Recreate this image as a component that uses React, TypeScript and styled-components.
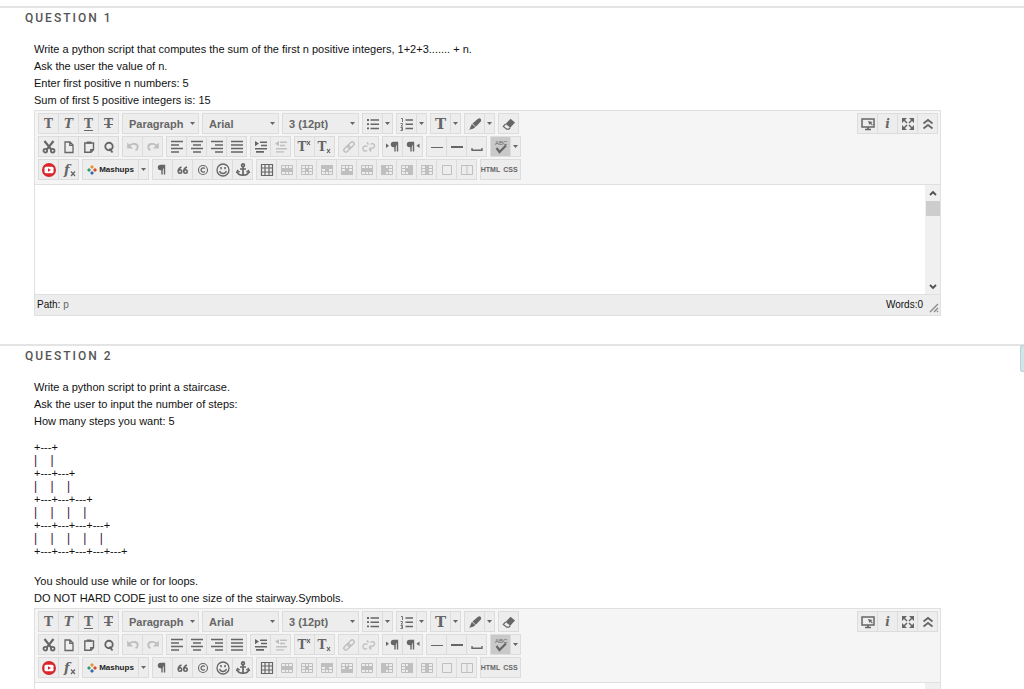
import React, { ReactNode } from "react";
import styled, { createGlobalStyle } from "styled-components";

const GlobalStyle = createGlobalStyle`
  body {
    margin: 0;
    background: #fff;
    color: #111;
    font-family: "Liberation Sans", Arial, sans-serif;
    font-size: 11px;
    line-height: 17px;
  }
  * { box-sizing: border-box; }
`;

const Page = styled.main`
  position: relative;
  height: 100vh;
  overflow-y: auto;
  scrollbar-width: none;
  padding-top: 6px;
`;

const SideTab = styled.div`
  position: absolute;
  top: 345px;
  right: 0;
  width: 4px;
  height: 27px;
  background: #cfe6ea;
  border: 1px solid #bccfd3;
  border-right: 0;
  border-radius: 3px 0 0 3px;
`;

const Question = styled.section`
  border-top: 2px solid #e4e4e4;
  padding: 0 83px 28px 34px;
`;

const Heading = styled.h2`
  margin: 0 0 13px -9px;
  font-family: Roboto, "Liberation Sans", sans-serif;
  font-size: 12px;
  font-weight: 500;
  line-height: 20px;
  letter-spacing: 2px;
  color: #555;
`;

const Line = styled.p`
  margin: 0;
`;

const Stairs = styled.div`
  margin: 11px 0 15px;
  white-space: pre;
`;

const Tread = styled.div`
  font-size: 11px;
  line-height: 13px;
`;

const Riser = styled.div`
  font-size: 12px;
  line-height: 13px;
  color: #3b1040;
`;

const EditorBox = styled.div`
  margin-top: 1px;
  border: 1px solid #e0e0e0;
`;

const Toolbar = styled.div`
  display: flex;
  justify-content: space-between;
  align-items: flex-start;
  padding: 2px 2px 4px 3px;
  background: #f5f5f5;
  border-bottom: 1px solid #e0e0e0;
`;

const Rows = styled.div`
  display: flex;
  flex-direction: column;
  gap: 2px;
`;

const Row = styled.div`
  display: flex;
  gap: 3px;
`;

const Group = styled.div`
  display: flex;
  height: 21px;
  background: #ededed;
  border: 1px solid #dcdcdc;
  border-left: 0;
`;

const Tool = styled.button<{ $w?: number; $off?: boolean; $on?: boolean; $bare?: boolean }>`
  display: flex;
  align-items: center;
  justify-content: center;
  width: ${(p) => p.$w ?? 20}px;
  height: 19px;
  padding: 0;
  border: 0;
  border-left: 1px solid ${(p) => (p.$bare ? "transparent" : "#dcdcdc")};
  background: ${(p) => (p.$on ? "#c9c9c9" : "transparent")};
  color: ${(p) => (p.$off ? "#bfbfbf" : "#666")};
  font-family: inherit;
  svg { display: block; flex: none; }
`;

const Letter = styled.span<{ $kind?: "i" | "u" | "s"; $large?: boolean }>`
  font-family: "DejaVu Serif", serif;
  font-size: ${(p) => (p.$large ? 15 : 12)}px;
  font-weight: 700;
  line-height: 14px;
  font-style: ${(p) => (p.$kind === "i" ? "italic" : "normal")};
  text-decoration: ${(p) => (p.$kind === "u" ? "underline" : p.$kind === "s" ? "line-through" : "none")};
  text-underline-offset: 2px;
  text-decoration-thickness: 1px;
`;

const Small = styled.span`
  font-size: 7px;
  line-height: 10px;
  font-weight: 700;
`;

const MashLabel = styled.span`
  margin-left: 2px;
  font-size: 8px;
  line-height: 12px;
  font-weight: 700;
  color: #222;
`;

const Picker = styled.label`
  display: flex;
  align-items: center;
  width: 76px;
  padding-right: 3px;
  border-left: 1px solid #dcdcdc;
  color: #666;
`;

const Select = styled.select`
  flex: 1;
  min-width: 0;
  height: 19px;
  padding: 0 0 0 6px;
  border: 0;
  appearance: none;
  background: transparent;
  color: #666;
  font-family: "Liberation Sans", Arial, sans-serif;
  font-size: 11px;
  font-weight: 700;
`;

const Body = styled.div`
  display: flex;
  height: 109px;
`;

const Area = styled.textarea`
  flex: 1;
  min-width: 0;
  border: 0;
  padding: 8px;
  resize: none;
  outline: none;
  background: #fff;
  font: inherit;
`;

const Scroll = styled.div`
  display: flex;
  flex-direction: column;
  align-items: center;
  width: 15px;
  background: #f0f0f0;
  color: #505050;
`;

const Thumb = styled.div`
  width: 14px;
  height: 15px;
  margin-bottom: auto;
  background: #cdcdcd;
`;

const Status = styled.div`
  display: flex;
  align-items: center;
  height: 21px;
  padding: 0 0 2px 2px;
  background: #ededed;
  border-top: 1px solid #e0e0e0;
  font-size: 10px;
`;

const PathName = styled.span`
  margin-left: 3px;
  color: #666;
`;

const Words = styled.span`
  margin-left: auto;
  margin-right: 6px;
`;

const Svg = ({ children, w = 16, h = 16 }: { children: ReactNode; w?: number; h?: number }) => (
  <svg width={w} height={h} viewBox={`0 0 ${w} ${h}`} fill="none" stroke="currentColor" aria-hidden="true">
    {children}
  </svg>
);

const Caret = () => (
  <Svg w={5} h={3}>
    <path d="M0 0h5L2.5 3z" fill="currentColor" stroke="none" />
  </Svg>
);

const Chevron = ({ down }: { down?: boolean }) => (
  <Svg w={14} h={16}>
    <path d={down ? "M4 7l3 3 3-3" : "M4 10l3-3 3 3"} strokeWidth="1.8" />
  </Svg>
);

const lines = (rows: number[][]) => (
  <path strokeWidth="1.6" d={rows.map(([x, w], i) => `M${x} ${2.5 + i * 3.5}h${w}`).join("")} />
);

const grid = (fill: string) => (
  <g strokeWidth="1">
    <path d="M2.5 3.5h11v9h-11zM2.5 6.5h11M2.5 9.5h11M6.5 3.5v9M9.5 3.5v9" />
    <path d={fill} fill="currentColor" stroke="none" />
  </g>
);

const pilcrow = (x: number) => (
  <g transform={`translate(${x} 0)`}>
    <path d="M8.5 3.5v9M6 3.5v9" strokeWidth="1.4" />
    <path d="M9.4 2.8H4.5a2.6 2.6 0 0 0 0 5.4h2z" fill="currentColor" stroke="none" />
  </g>
);

const icons: Record<string, ReactNode> = {
  cut: (
    <g strokeWidth="1.8">
      <path d="M3.5 2l6.8 8.6M12.5 2L5.7 10.6" strokeWidth="2.2" />
      <circle cx="4.3" cy="11.7" r="1.8" />
      <circle cx="11.7" cy="11.7" r="1.8" />
    </g>
  ),
  copy: <path d="M4 3h5l3 3v7.5H4zM8.8 3v3.4H12" strokeWidth="1.3" />,
  paste: (
    <g strokeWidth="1.4">
      <path d="M6 4H3.8v9.3h6.2l2.5-2.5V4H10M12.4 10.6H9.8v2.6" />
      <path d="M5.8 2.5h4.6v2.4H5.8z" fill="currentColor" stroke="none" />
    </g>
  ),
  find: (
    <g strokeWidth="1.9">
      <circle cx="8" cy="7.5" r="3.7" />
      <path d="M8.5 9.5l3 4" />
    </g>
  ),
  undo: (
    <g>
      <path d="M4.5 6.5C8 3.5 13 5 12.7 8.3c-.1 1.4-1 2.3-2.2 2.7" strokeWidth="1.9" />
      <path d="M2.2 3.5v6h6z" fill="currentColor" stroke="none" />
    </g>
  ),
  redo: (
    <g>
      <path d="M11.5 6.5C8 3.5 3 5 3.3 8.3c.1 1.4 1 2.3 2.2 2.7" strokeWidth="1.9" />
      <path d="M13.8 3.5v6h-6z" fill="currentColor" stroke="none" />
    </g>
  ),
  left: lines([[2, 12], [2, 8], [2, 12], [2, 8]]),
  center: lines([[2, 12], [4, 8], [2, 12], [4, 8]]),
  right: lines([[2, 12], [6, 8], [2, 12], [6, 8]]),
  full: lines([[2, 12], [2, 12], [2, 12], [2, 12]]),
  indent: (
    <g>
      <path d="M7 3.3h7M8 6.5h6M2 9.7h12M3 12.9h8" strokeWidth="1.6" />
      <path d="M2 2l4 2.6-4 2.6z" fill="currentColor" stroke="none" />
    </g>
  ),
  outdent: (
    <g>
      <path d="M7 3.3h7M7 6.5h5M3 9.7h11M3 12.9h8" strokeWidth="1.4" />
      <path d="M6 2L2 4.6l4 2.6z" fill="currentColor" stroke="none" />
    </g>
  ),
  link: (
    <g transform="rotate(-45 8 8)" strokeWidth="1.4">
      <rect x="1.5" y="6" width="7.5" height="4" rx="2" />
      <rect x="7" y="6" width="7.5" height="4" rx="2" />
    </g>
  ),
  unlink: (
    <g strokeWidth="1.4">
      <path d="M6.5 7.5c-2-1.5-4.5 0-4.5 2.3s2.5 3 4 1.5M9.5 8.5c2 1.5 4.5 0 4-2s-2.5-2.5-4-1" />
      <path d="M6 3.5l1.5 2M10 12.5L8.500 10.500M8 9.500l2.500 1" />
    </g>
  ),
  ltr: (
    <g>
      {pilcrow(4)}
      <path d="M1 4.5l3 2.3-3 2.3z" fill="currentColor" stroke="none" />
    </g>
  ),
  rtl: (
    <g>
      {pilcrow(0)}
      <path d="M14.5 4.5l-3 2.3 3 2.3z" fill="currentColor" stroke="none" />
    </g>
  ),
  rule: <path d="M2 8.5h12" strokeWidth="1" />,
  thick: <path d="M2 8h12" strokeWidth="2" />,
  nbsp: <path d="M3 9v2.3h10V9" strokeWidth="1.4" />,
  spell: (
    <g>
      <text x="2" y="6" fontSize="6" fill="currentColor" stroke="none">ABC</text>
      <path d="M3.5 9l3 4L13 6.5" strokeWidth="2.2" />
    </g>
  ),
  ul: (
    <g>
      <path d="M5.5 4h8.5M5.5 8.2h8.5M5.5 12.4h8.5" strokeWidth="1.5" />
      <path d="M2 4h2M2 8.2h2M2 12.4h2" strokeWidth="1.8" />
    </g>
  ),
  ol: (
    <g>
      <path d="M6.5 4h7.5M6.5 8.2h7.5M6.5 12.4h7.5" strokeWidth="1.5" />
      <path d="M2 2.5h1.5V6M1.5 7.5h2v1l-1.5 1.5h2M1.5 11.5h2v3h-2M2 13h1.5" strokeWidth=".9" />
    </g>
  ),
  pen: (
    <g fill="currentColor" stroke="none">
      <path d="M5.5 7.5L11 2.8q1.700-1 2.800.2 1 1.300-.2 2.800L8.800 10.800z" />
      <path d="M4.900 8.100l3.400 3q-1.500 2.300-6.300 2.600 1.400-1.200 1.300-2.500z" />
    </g>
  ),
  eraser: (
    <g>
      <path d="M9.5 2.8L14 6.5l-4.8 5.2-4.6-3.800z" fill="currentColor" stroke="none" />
      <path d="M4.600 8L2.300 10.400l3.400 2.800h2.200l1.400-1.600" strokeWidth="1.2" />
    </g>
  ),
  youtube: (
    <g stroke="none">
      <circle cx="8" cy="8" r="7" fill="#d8262c" />
      <rect x="3.5" y="4.8" width="9" height="6.4" rx="1.5" fill="#fff" />
      <path d="M7 6.300L10 8 7 9.700z" fill="#d8262c" />
    </g>
  ),
  para: pilcrow(1),
  quote: (
    <g strokeWidth="1.6">
      <circle cx="5" cy="9.5" r="1.7" />
      <circle cx="10.5" cy="9.5" r="1.7" />
      <path d="M3.3 9q.2-3 3.200-4M8.800 9q.2-3 3.200-4" />
    </g>
  ),
  copyright: (
    <g>
      <circle cx="8" cy="8" r="4.5" strokeWidth="1.1" />
      <path d="M9.800 6.700a2.100 2.100 0 1 0 0 2.600" strokeWidth="1.3" />
    </g>
  ),
  smile: (
    <g>
      <circle cx="8" cy="8" r="6" strokeWidth="1.3" />
      <path d="M4.600 9c1 3.300 5.800 3.300 6.800 0" strokeWidth="1.3" />
      <path d="M6 5v2.200M10 5v2.200" strokeWidth="1.5" />
    </g>
  ),
  anchor: (
    <g strokeWidth="1.7">
      <circle cx="8" cy="3.3" r="1.4" />
      <path d="M8 4.700v8.500M5 7h6M2.500 9.500c.3 5 10.700 5 11 0" />
      <path d="M1.300 11l1.200-2.500L4.700 10M14.700 11l-1.200-2.500L11.300 10" strokeWidth="1.2" />
    </g>
  ),
  table: <path d="M2.5 2.5h11v11h-11zM2.5 6h11M2.5 10h11M6 2.500v11M10 2.500v11" strokeWidth="1.2" />,
  t1: grid("M2 6h12v4H2z"),
  t2: grid("M6 6h4v4H6z"),
  t3: grid("M2 3h12v3H2zM6 6h4v3H6z"),
  t4: grid("M2 10h12v3H2zM6 7h4v3H6z"),
  t5: grid("M3 6h3v4H3zM10 6h3v4h-3zM6 7h4v2H6z"),
  t6: grid("M2 3h4v10H2zM6 6h3v4H6z"),
  t7: grid("M10 3h4v10h-4zM7 6h3v4H7z"),
  t8: grid("M6 3h4v10H6z"),
  t9: <path d="M3.5 3.5h9v9h-9z" />,
  t10: <path d="M2.5 3.5h11v9h-11zM8 3.500v9" />,
  screen: (
    <g>
      <path d="M2 3h12v8H2z" strokeWidth="1.5" />
      <path d="M8 11v2.500M5 13.500h6" strokeWidth="1.7" />
      <path d="M8 5l1.500 4 .9-1.200L12 9.500l.8-.8-1.600-1.600L12.500 6z" fill="currentColor" stroke="none" />
    </g>
  ),
  expand: (
    <g>
      <path d="M3 3l4 4M13 3L9 7M3 13l4-4M13 13L9 9" strokeWidth="1.5" />
      <path d="M2 2h5L2 7zM14 2H9l5 5zM2 14h5L2 9zM14 14H9l5-5z" fill="currentColor" stroke="none" />
    </g>
  ),
  collapse: <path d="M3.5 7.500L8 4l4.500 3.500M3.500 12.500L8 9l4.500 3.500" strokeWidth="1.8" />,
};

const Btn = ({ icon, label, off, on }: { icon: string; label: string; off?: boolean; on?: boolean }) => (
  <Tool type="button" aria-label={label} $off={off} $on={on}>
    <Svg>{icons[icon]}</Svg>
  </Tool>
);

const Drop = ({ label }: { label: string }) => (
  <Tool type="button" aria-label={label} $w={10}>
    <Caret />
  </Tool>
);

const ToolSet = ({ items, off }: { items: [string, string][]; off?: boolean }) => (
  <Group>
    {items.map(([icon, label]) => (
      <Btn key={icon} icon={icon} label={label} off={off} />
    ))}
  </Group>
);

const Choice = ({ label, value }: { label: string; value: string }) => (
  <Group>
    <Picker>
      <Select aria-label={label} defaultValue={value}>
        <option>{value}</option>
      </Select>
      <Caret />
    </Picker>
  </Group>
);

const Editor = ({ name }: { name: string }) => (
  <EditorBox>
    <Toolbar>
      <Rows>
        <Row>
          <Group>
            <Tool type="button" aria-label="Bold"><Letter>T</Letter></Tool>
            <Tool type="button" aria-label="Italic"><Letter $kind="i">T</Letter></Tool>
            <Tool type="button" aria-label="Underline"><Letter $kind="u">T</Letter></Tool>
            <Tool type="button" aria-label="Strikethrough"><Letter $kind="s">T</Letter></Tool>
          </Group>
          <Choice label="Format" value="Paragraph" />
          <Choice label="Font" value="Arial" />
          <Choice label="Font size" value="3 (12pt)" />
          <Group><Btn icon="ul" label="Bullet list" /><Drop label="Bullet styles" /></Group>
          <Group><Btn icon="ol" label="Numbered list" /><Drop label="Number styles" /></Group>
          <Group>
            <Tool type="button" aria-label="Text color"><Letter $large>T</Letter></Tool>
            <Drop label="Text colors" />
          </Group>
          <Group><Btn icon="pen" label="Highlight" /><Drop label="Highlight colors" /></Group>
          <Group><Btn icon="eraser" label="Remove formatting" /></Group>
        </Row>
        <Row>
          <ToolSet items={[["cut", "Cut"], ["copy", "Copy"], ["paste", "Paste"], ["find", "Find"]]} />
          <ToolSet off items={[["undo", "Undo"], ["redo", "Redo"]]} />
          <ToolSet items={[["left", "Align left"], ["center", "Align center"], ["right", "Align right"], ["full", "Justify"]]} />
          <Group><Btn icon="indent" label="Indent" /><Btn icon="outdent" label="Outdent" off /></Group>
          <Group>
            <Tool type="button" aria-label="Superscript">
              <Letter>T</Letter>
              <Svg w={5} h={14}><path d="M1 1l3 4M4 1L1 5" strokeWidth="1.2" /></Svg>
            </Tool>
            <Tool type="button" aria-label="Subscript">
              <Letter>T</Letter>
              <Svg w={5} h={14}><path d="M1 9l3 4M4 9l-3 4" strokeWidth="1.2" /></Svg>
            </Tool>
          </Group>
          <ToolSet off items={[["link", "Insert link"], ["unlink", "Remove link"]]} />
          <ToolSet items={[["ltr", "Left to right"], ["rtl", "Right to left"]]} />
          <ToolSet items={[["rule", "Line"], ["thick", "Horizontal rule"], ["nbsp", "Nonbreaking space"]]} />
          <Group><Btn icon="spell" label="Spell check" on /><Drop label="Spelling languages" /></Group>
        </Row>
        <Row>
          <Group>
            <Btn icon="youtube" label="Video" />
            <Tool type="button" aria-label="Formula">
              <Svg>
                <text x="3" y="12" fontFamily="DejaVu Serif" fontStyle="italic" fontWeight="700" fontSize="13" fill="currentColor" stroke="none">f</text>
                <path d="M10 9.500l4 4.500M14 9.500L10 14" strokeWidth="1.2" />
              </Svg>
            </Tool>
          </Group>
          <Group>
            <Tool type="button" $w={56}>
              <Svg w={10} h={10}>
                <g stroke="none">
                  <path d="M5 0l2 2-2 2-2-2z" fill="#e8912d" />
                  <path d="M8 3l2 2-2 2-2-2z" fill="#d9482b" />
                  <path d="M5 6l2 2-2 2-2-2z" fill="#2b6cb0" />
                  <path d="M2 3l2 2-2 2-2-2z" fill="#2a9d6a" />
                </g>
              </Svg>
              <MashLabel>Mashups</MashLabel>
            </Tool>
            <Drop label="Mashup types" />
          </Group>
          <ToolSet items={[["para", "Show characters"], ["quote", "Block quote"], ["copyright", "Symbol"], ["smile", "Emoticon"], ["anchor", "Anchor"]]} />
          <Group>
            <Btn icon="table" label="Insert table" />
            <Btn icon="t1" label="Row properties" off />
            <Btn icon="t2" label="Cell properties" off />
            <Btn icon="t3" label="Insert row above" off />
            <Btn icon="t4" label="Insert row below" off />
            <Btn icon="t5" label="Delete row" off />
            <Btn icon="t6" label="Insert column left" off />
            <Btn icon="t7" label="Insert column right" off />
            <Btn icon="t8" label="Delete column" off />
            <Btn icon="t9" label="Merge cells" off />
            <Btn icon="t10" label="Split cells" off />
          </Group>
          <Group>
            <Tool type="button"><Small>HTML</Small></Tool>
            <Tool type="button" $bare><Small>CSS</Small></Tool>
          </Group>
        </Row>
      </Rows>
      <Group>
        <Btn icon="screen" label="Preview" />
        <Tool type="button" aria-label="Help"><Letter $kind="i">i</Letter></Tool>
        <Btn icon="expand" label="Full screen" />
        <Btn icon="collapse" label="Show less" />
      </Group>
    </Toolbar>
    <Body>
      <Area aria-label={name} />
      <Scroll>
        <Chevron />
        <Thumb />
        <Chevron down />
      </Scroll>
    </Body>
    <Status>
      <span>Path:</span>
      <PathName>p</PathName>
      <Words>Words:0</Words>
      <Svg w={11} h={18}>
        <path d="M1 17l8-8M5 17l4-4M8 17l1-1" stroke="#888" strokeWidth="1.3" />
      </Svg>
    </Status>
  </EditorBox>
);

const STEPS = 5;

const Staircase = () => (
  <Stairs>
    {Array.from({ length: STEPS }, (_, i) => (
      <React.Fragment key={i}>
        {i > 0 && <Riser>{"|" + "    |".repeat(i)}</Riser>}
        <Tread>{"+" + "---+".repeat(i + 1)}</Tread>
      </React.Fragment>
    ))}
  </Stairs>
);

export default function App() {
  return (
    <>
      <GlobalStyle />
      <Page>
        <Question>
          <Heading>QUESTION 1</Heading>
          <Line>Write a python script that computes the sum of the first n positive integers, 1+2+3....... + n.</Line>
          <Line>Ask the user the value of n.</Line>
          <Line>Enter first positive n numbers: 5</Line>
          <Line>Sum of first 5 positive integers is: 15</Line>
          <Editor name="Answer to question 1" />
        </Question>
        <Question>
          <Heading>QUESTION 2</Heading>
          <Line>Write a python script to print a staircase.</Line>
          <Line>Ask the user to input the number of steps:</Line>
          <Line>How many steps you want: 5</Line>
          <Staircase />
          <Line>You should use while or for loops.</Line>
          <Line>DO NOT HARD CODE just to one size of the stairway.Symbols.</Line>
          <Editor name="Answer to question 2" />
        </Question>
        <SideTab />
      </Page>
    </>
  );
}
